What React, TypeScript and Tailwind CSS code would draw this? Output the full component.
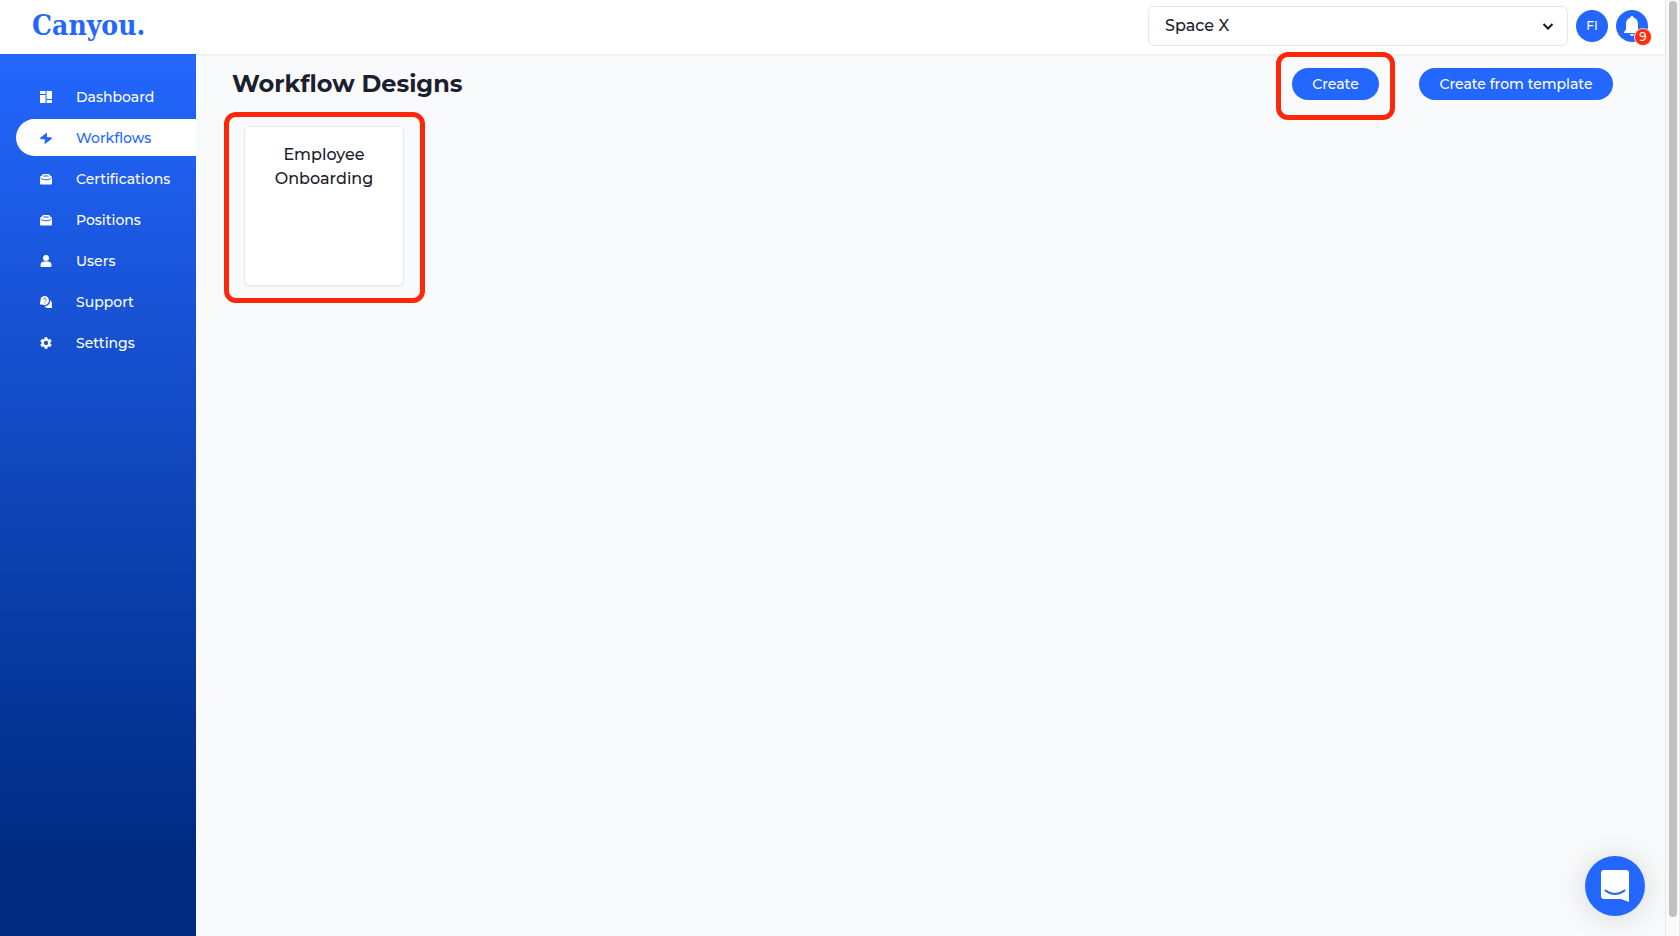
import type { ReactNode } from "react";

type IconProps = { children: ReactNode };

function Icon({ children }: IconProps) {
  return (
    <svg viewBox="0 0 24 24" fill="currentColor" className="size-3 shrink-0" aria-hidden="true">
      {children}
    </svg>
  );
}

const briefcase = (
  <>
    <path
      fillRule="evenodd"
      d="M3 6c1-3 3-4 6-4h6c3 0 5 1 6 4 2 0 3 1 3 3v11c0 2-1 3-3 3H3c-2 0-3-1-3-3V9c0-2 1-3 3-3Zm3 1h12c0-1-1-2-3-2H9C7 5 6 6 6 7Z"
    />
    <path d="M1 9.500c3 3 6 4 11 4s8-1 11-4" fill="none" stroke="#1f5cec" strokeWidth="2" />
  </>
);

const navItems = [
  {
    label: "Dashboard",
    icon: <path d="M0 0h11v6H0V0Zm0 8h11v16H0V8Zm13-8h11v16H13V0Zm0 18h11v6H13v-6Z" />,
  },
  { label: "Workflows", icon: <path d="M14 1 1 11 0 14l10 1-1 8 1 1L23 14l1-3-10-1V1Z" />, active: true },
  { label: "Certifications", icon: briefcase },
  { label: "Positions", icon: briefcase },
  {
    label: "Users",
    icon: (
      <>
        <circle cx="12" cy="6" r="6" />
        <path d="M8 13h8c4 0 7 3 7 7v1c0 2-1 3-3 3H4c-2 0-3-1-3-3v-1c0-4 3-7 7-7Z" />
      </>
    ),
  },
  {
    label: "Support",
    icon: (
      <>
        <path d="M9 0a9 9 0 0 1 0 18c-2 0-3 0-4-1H0v-4l1-2V9a9 9 0 0 1 8-9Z" />
        <path d="M20 8c4 3 5 7 3 11l1 1v4h-5c-4 1-8 0-10-4 7 0 12-5 11-12Z" />
        <path d="M6.500 7c0-4 6-3.500 6-.5C12.500 9 9.500 8.500 9.500 11M9.500 13v2" fill="none" stroke="#1c56e0" strokeWidth="1.600" />
      </>
    ),
  },
  {
    label: "Settings",
    icon: (
      <path
        transform="translate(-2.400 -2.400) scale(1.200)"
        d="M19.140 12.940c.04-.3.06-.61.06-.94 0-.32-.02-.64-.07-.94l2.030-1.580a.49.49 0 0 0 .12-.61l-1.920-3.320a.488.488 0 0 0-.59-.22l-2.390.96c-.5-.38-1.030-.7-1.620-.94l-.36-2.540a.484.484 0 0 0-.48-.41h-3.840c-.24 0-.43.17-.47.41l-.36 2.540c-.59.24-1.130.57-1.620.94l-2.390-.96c-.22-.08-.47 0-.59.22L2.740 8.870c-.12.21-.08.47.12.61l2.030 1.580c-.05.3-.09.63-.09.94s.02.64.07.94l-2.030 1.580a.49.49 0 0 0-.12.61l1.920 3.320c.12.22.37.29.59.22l2.390-.96c.5.38 1.030.7 1.620.94l.36 2.540c.05.24.24.41.48.41h3.840c.24 0 .44-.17.47-.41l.36-2.540c.59-.24 1.130-.56 1.620-.94l2.390.96c.22.08.47 0 .59-.22l1.920-3.320c.12-.22.07-.47-.12-.61l-2.010-1.580ZM12 15.600a3.600 3.600 0 1 1 0-7.200 3.600 3.600 0 0 1 0 7.200Z"
      />
    ),
  },
];

function Header() {
  return (
    <header className="relative flex h-[54px] shrink-0 items-center justify-between bg-white pr-[17px] pb-0.5 pl-8 shadow-[0_1px_2px_rgba(0,0,0,0.08)]">
      <a
        href="#"
        className="font-['DejaVu_Serif_Condensed','DejaVu_Serif',serif] text-[28px] leading-8 font-bold text-[#2467ff]"
      >
        Canyou.
      </a>
      <div className="flex items-center gap-2">
        <div className="relative w-[420px]">
          <select
            aria-label="Organisation"
            className="h-10 w-full appearance-none rounded-md border border-[#e5e7f0] bg-white px-4 text-base font-medium text-[#1a202c]"
          >
            <option>Space X</option>
          </select>
          <svg
            viewBox="0 0 12 12"
            fill="none"
            stroke="#111827"
            strokeWidth="2"
            className="pointer-events-none absolute top-3.5 right-3.5 size-3"
            aria-hidden="true"
          >
            <path d="m1.500 4 4.500 4.500L10.500 4" />
          </svg>
        </div>
        <button type="button" className="size-8 rounded-full bg-[#2467ff] text-xs font-medium text-white">
          FI
        </button>
        <button
          type="button"
          aria-label="Notifications"
          className="relative flex size-8 items-center justify-center rounded-full bg-[#2467ff] text-white"
        >
          <svg viewBox="0 0 16 20" fill="currentColor" className="h-5 w-4" aria-hidden="true">
            <path d="M8 0c1 0 1.700.7 1.700 1.800C12.500 2.500 14 5 14 8v5.500l2 2.500v1H0v-1l2-2.500V8c0-3 1.500-5.500 4.300-6.200C6.300.7 7 0 8 0ZM6 18h4c0 1.300-.9 2-2 2s-2-.7-2-2Z" />
          </svg>
          <span className="absolute -right-[3px] -bottom-[3px] flex size-4 items-center justify-center rounded-full bg-[#ff2d0c] text-xs font-medium ring-1 ring-[#f3d5d0]">
            9
          </span>
        </button>
      </div>
    </header>
  );
}

function Sidebar() {
  return (
    <nav className="w-[196px] shrink-0 bg-linear-to-b from-[#2467ff] to-[#002a80] to-92% pt-6 pl-4">
      <ul className="flex flex-col gap-1">
        {navItems.map(({ label, icon, active }) => (
          <li key={label}>
            <a
              href="#"
              aria-current={active ? "page" : undefined}
              className={`flex h-[37px] items-center gap-6 rounded-l-full pl-6 text-sm font-medium ${
                active ? "bg-white text-[#2467ff]" : "text-white"
              }`}
            >
              <Icon>{icon}</Icon>
              {label}
            </a>
          </li>
        ))}
      </ul>
    </nav>
  );
}

function Designs() {
  return (
    <main className="min-w-0 flex-1">
      <div className="flex items-center justify-between pt-3.5 pr-[52px] pl-9">
        <h1 className="text-2xl leading-8 font-bold text-[#1a202c]">Workflow Designs</h1>
        <div className="flex items-center gap-10">
          <div className="relative">
            <button type="button" className="h-8 w-[87px] rounded-full bg-[#2467ff] text-sm font-medium text-white">
              Create
            </button>
            <div className="pointer-events-none absolute -top-4 -right-4 -bottom-5 -left-4 rounded-xl border-5 border-[#ff260a]" />
          </div>
          <button type="button" className="h-8 w-[194px] rounded-full bg-[#2467ff] text-sm font-medium text-white">
            Create from template
          </button>
        </div>
      </div>
      <div className="mt-3 ml-7 inline-flex rounded-xl border-5 border-[#ff260a] pt-[9px] pr-4 pb-3 pl-[15px]">
        <a
          href="#"
          className="size-40 rounded-md border border-[#e2e8f0] bg-white px-6 py-4 text-center text-base leading-6 font-medium text-[#1a202c] shadow-xs"
        >
          Employee Onboarding
        </a>
      </div>
    </main>
  );
}

function ScrollTrack() {
  return (
    <div className="flex w-[15px] shrink-0 justify-center border-x border-[#e8e8ec] bg-[#fafafa] pt-px pb-[19px]">
      <div className="w-2 rounded-full bg-[#c1c1c1]" />
    </div>
  );
}

export default function App() {
  return (
    <div className="flex min-h-screen bg-[#f9fafc] font-['Montserrat','Inter',sans-serif]">
      <div className="flex min-w-0 flex-1 flex-col">
        <Header />
        <div className="flex flex-1">
          <Sidebar />
          <Designs />
        </div>
      </div>
      <ScrollTrack />
      <button
        type="button"
        aria-label="Open chat"
        className="fixed right-[35px] bottom-5 flex size-15 items-center justify-center rounded-full bg-[#2467ff] text-white shadow-[0_2px_30px_rgba(0,0,0,0.15)]"
      >
        <svg viewBox="0 0 28 32" className="h-8 w-7" aria-hidden="true">
          <path fill="currentColor" d="M3 0h22a3 3 0 0 1 3 3v29l-8-3H3a3 3 0 0 1-3-3V3a3 3 0 0 1 3-3Z" />
          <path d="M4.500 20.500c5.500 4.500 13.500 4.500 19 0" fill="none" stroke="#2467ff" strokeWidth="2" strokeLinecap="round" />
        </svg>
      </button>
    </div>
  );
}
